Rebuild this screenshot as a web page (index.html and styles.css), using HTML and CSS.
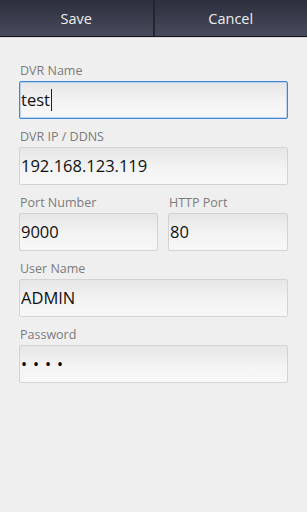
FILE: index.html
```html
<!DOCTYPE html>
<html>
<head>
<meta charset="utf-8">
<link rel="stylesheet" href="styles.css">
</head>
<body>
<div class="topbar">
  <div class="tbtn">Save</div>
  <div class="sep"></div>
  <div class="tbtn">Cancel</div>
</div>
<div class="form">
  <div class="field">
    <div class="label">DVR Name</div>
    <div class="input focused">test<span class="caret"></span></div>
  </div>
  <div class="field">
    <div class="label">DVR IP / DDNS</div>
    <div class="input">192.168.123.119</div>
  </div>
  <div class="row">
    <div class="field port">
      <div class="label">Port Number</div>
      <div class="input">9000</div>
    </div>
    <div class="field http">
      <div class="label">HTTP Port</div>
      <div class="input">80</div>
    </div>
  </div>
  <div class="field">
    <div class="label">User Name</div>
    <div class="input">ADMIN</div>
  </div>
  <div class="field">
    <div class="label">Password</div>
    <div class="input pw"><span class="dots">••••</span></div>
  </div>
</div>
</body>
</html>
```

FILE: styles.css
```css
html, body {
  margin: 0;
  padding: 0;
  background: #efefef;
  width: 307px;
  height: 512px;
  overflow: hidden;
  font-family: "Open Sans", "Noto Sans", sans-serif;
}
.topbar {
  display: flex;
  height: 36px;
  background: linear-gradient(#2c2f3d, #464a5a);
  border-bottom: 1px solid #15161c;
  box-shadow: 0 1px 0 #d8d8d8;
}
.tbtn {
  flex: 1;
  display: flex;
  align-items: center;
  justify-content: center;
  color: #eeeeee;
  font-size: 14.5px;
  padding-top: 1px;
}
.sep {
  width: 2px;
  background: #23252f;
}
.form {
  padding: 23px 19px 0 19px;
  display: flex;
  flex-direction: column;
}
.field {
  display: flex;
  flex-direction: column;
}
.label {
  height: 20px;
  line-height: 20px;
  font-size: 12.5px;
  color: #7b7b7b;
  padding-left: 1px;
  padding-top: 1px;
}
.input {
  height: 36px;
  border: 1px solid #d3d3d3;
  border-radius: 2px;
  background: linear-gradient(#e6e6e6, #f4f4f4 60%, #f7f7f7);
  font-size: 16.5px;
  line-height: 36px;
  color: #111;
  padding-left: 1px;
  margin-bottom: 7px;
  display: flex;
  align-items: center;
}
.input.focused {
  border-color: #3d86d6;
  box-shadow: inset 0 0 0 0.5px #8ab6e6;
}
.caret {
  display: inline-block;
  width: 1px;
  height: 22px;
  background: #222;
  margin-left: 1px;
}
.row {
  display: flex;
  gap: 10px;
}
.port { width: 139px; }
.http { flex: 1; }
.dots {
  font-size: 16px;
  letter-spacing: 6px;
  color: #000;
}
```
